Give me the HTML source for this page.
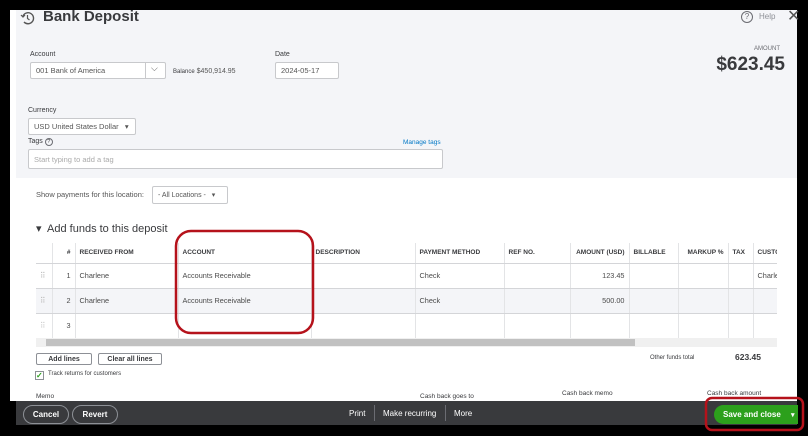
<!DOCTYPE html>
<html><head><style>
*{box-sizing:border-box;margin:0;padding:0}
body{width:808px;height:436px;background:#000;position:relative;overflow:hidden;font-family:"Liberation Sans",sans-serif;color:#393a3d}
.a{position:absolute}
.lbl{font-size:7px;color:#393a3d}
.in{position:absolute;background:#fff;border:1px solid #c8c9cc;border-radius:2px;font-size:7.5px;color:#555;padding-left:5px;display:flex;align-items:center}
table{border-collapse:collapse;font-size:7.3px}
td,th{border-left:1px solid #e3e4e6;padding:0 4px;text-align:left;white-space:nowrap;overflow:hidden}
th{font-weight:bold;font-size:6.5px;color:#393a3d;height:20px;border-bottom:1px solid #d4d5d8}
td{height:25px;color:#4a4a4a;border-bottom:1px solid #d4d5d8}
.btn{position:absolute;border:1px solid #8d9096;border-radius:2px;background:#fff;font-size:7px;font-weight:bold;display:flex;align-items:center;justify-content:center;height:12px}
</style></head><body>
<div class="a" style="left:10px;top:10px;width:787px;height:391px;background:#fff"></div>
<div class="a" style="left:16px;top:10px;width:781px;height:168px;background:#f4f5f8"></div>
<svg class="a" style="left:20px;top:11px" width="15" height="14" viewBox="0 0 15 14"><path d="M3 5A5.5 5.5 0 1 1 4 11" fill="none" stroke="#555" stroke-width="1.4"/><path d="M7.5 4v3.5l2 1.5" fill="none" stroke="#555" stroke-width="1.2"/><path d="M1 4l2 2 2-2" fill="none" stroke="#555" stroke-width="1.2"/></svg>
<div class="a" style="left:43px;top:8px;font-size:15px;font-weight:bold;color:#393a3d">Bank Deposit</div>
<div class="a" style="left:741px;top:11px;width:12px;height:12px;border:1px solid #6b6c72;border-radius:50%;font-size:8px;text-align:center;line-height:10px;color:#6b6c72">?</div>
<div class="a" style="left:759px;top:12px;font-size:8px;color:#8d9096">Help</div>
<div class="a" style="left:787px;top:6px;font-size:16px;color:#555">✕</div>
<div class="a lbl" style="left:30px;top:51px">Account</div>
<div class="in" style="left:30px;top:62px;width:136px;height:17px">001 Bank of America</div>
<div class="a" style="left:145px;top:62px;width:1px;height:17px;background:#c8c9cc"></div>
<div class="a" style="left:151px;top:63px;font-size:9px;color:#555">⌵</div>
<div class="a" style="left:173px;top:68px;font-size:7px"><span style="font-size:6px">Balance</span> <span style="color:#555">$450,914.95</span></div>
<div class="a lbl" style="left:275px;top:51px">Date</div>
<div class="in" style="left:275px;top:62px;width:64px;height:17px">2024-05-17</div>
<div class="a" style="left:754px;top:46px;font-size:6px;color:#6b6c72">AMOUNT</div>
<div class="a" style="left:690px;top:54px;width:95px;text-align:right;font-size:19px;font-weight:bold;color:#393a3d">$623.45</div>
<div class="a lbl" style="left:28px;top:107px">Currency</div>
<div class="in" style="left:28px;top:118px;width:108px;height:17px">USD United States Dollar&nbsp;&nbsp;&nbsp;▾</div>
<div class="a lbl" style="left:28px;top:138px">Tags <span style="display:inline-block;width:8px;height:8px;border:1px solid #6b6c72;border-radius:50%;font-size:5.5px;text-align:center;line-height:7px">?</span></div>
<div class="a" style="left:403px;top:139px;font-size:6.5px;color:#0077c5">Manage tags</div>
<div class="in" style="left:28px;top:149px;width:415px;height:20px;color:#aaa">Start typing to add a tag</div>
<div class="a" style="left:36px;top:190px;font-size:7.5px;color:#555">Show payments for this location:</div>
<div class="in" style="left:152px;top:186px;width:76px;height:18px;font-size:7px">- All Locations -&nbsp;&nbsp;&nbsp;▾</div>
<div class="a" style="left:36px;top:222px;font-size:11px;color:#393a3d">▾&nbsp; Add funds to this deposit</div>
<div class="a" style="left:36px;top:243px;width:741px;overflow:hidden">
<table style="width:760px;table-layout:fixed">
<colgroup><col style="width:16px"><col style="width:23px"><col style="width:103px"><col style="width:133px"><col style="width:104px"><col style="width:89px"><col style="width:66px"><col style="width:59px"><col style="width:49px"><col style="width:50px"><col style="width:25px"><col style="width:43px"></colgroup>
<tr><th style="border-left:none"></th><th style="text-align:right">#</th><th>RECEIVED FROM</th><th>ACCOUNT</th><th>DESCRIPTION</th><th>PAYMENT METHOD</th><th>REF NO.</th><th style="text-align:right">AMOUNT (USD)</th><th>BILLABLE</th><th style="text-align:right">MARKUP %</th><th>TAX</th><th>CUSTOMER</th></tr>
<tr><td style="border-left:none;color:#bbb">⠿</td><td style="text-align:right">1</td><td>Charlene</td><td>Accounts Receivable</td><td></td><td>Check</td><td></td><td style="text-align:right">123.45</td><td></td><td></td><td></td><td>Charlene</td></tr>
<tr style="background:#f4f5f8"><td style="border-left:none;color:#bbb">⠿</td><td style="text-align:right">2</td><td>Charlene</td><td>Accounts Receivable</td><td></td><td>Check</td><td></td><td style="text-align:right">500.00</td><td></td><td></td><td></td><td></td></tr>
<tr><td style="border-left:none;color:#ccc">⠿</td><td style="text-align:right">3</td><td></td><td></td><td></td><td></td><td></td><td></td><td></td><td></td><td></td><td></td></tr>
</table></div>
<div class="a" style="left:36px;top:338px;width:741px;height:9px;background:#f0f0f0"></div>
<div class="a" style="left:46px;top:339px;width:589px;height:7px;background:#c1c1c1"></div>
<div class="btn" style="left:36px;top:353px;width:56px">Add lines</div>
<div class="btn" style="left:98px;top:353px;width:64px">Clear all lines</div>
<div class="a" style="left:35px;top:371px;width:9px;height:9px;border:1px solid #8d9096;background:#fff;color:#2ca01c;font-size:8px;line-height:7px;font-weight:bold">✓</div>
<div class="a" style="left:48px;top:371px;font-size:6px">Track returns for customers</div>
<div class="a" style="left:650px;top:355px;font-size:6px">Other funds total</div>
<div class="a" style="left:735px;top:352px;font-size:8.5px;font-weight:bold">623.45</div>
<div class="a" style="left:36px;top:393px;font-size:6.5px">Memo</div>
<div class="a" style="left:420px;top:393px;font-size:6.5px">Cash back goes to</div>
<div class="a" style="left:562px;top:390px;font-size:6.5px">Cash back memo</div>
<div class="a" style="left:707px;top:390px;font-size:6.5px">Cash back amount</div>
<div class="a" style="left:16px;top:401px;width:781px;height:24px;background:#393a3d"></div>
<div class="a" style="left:23px;top:405px;width:46px;height:19px;border:1px solid #8d9096;border-radius:10px;color:#fff;font-size:8px;font-weight:bold;text-align:center;line-height:17px">Cancel</div>
<div class="a" style="left:72px;top:405px;width:46px;height:19px;border:1px solid #8d9096;border-radius:10px;color:#fff;font-size:8px;font-weight:bold;text-align:center;line-height:17px">Revert</div>
<div class="a" style="left:349px;top:409px;font-size:8px;color:#fff">Print</div>
<div class="a" style="left:374px;top:405px;width:1px;height:16px;background:#6b6c72"></div>
<div class="a" style="left:383px;top:409px;font-size:8px;color:#fff">Make recurring</div>
<div class="a" style="left:445px;top:405px;width:1px;height:16px;background:#6b6c72"></div>
<div class="a" style="left:454px;top:409px;font-size:8px;color:#fff">More</div>
<div class="a" style="left:714px;top:405px;width:84px;height:19px;background:#2ca01c;border-radius:10px 0 0 10px;color:#fff;font-size:8px;font-weight:bold;line-height:19px;padding-left:9px">Save and close <span style="margin-left:8px;font-size:7px">▾</span></div>
<svg class="a" style="left:0;top:0" width="808" height="436"><rect x="176" y="231" width="137" height="102" rx="15" fill="none" stroke="#b5121b" stroke-width="2.5"/><rect x="706" y="398" width="97" height="32" rx="6" fill="none" stroke="#b5121b" stroke-width="2.5"/></svg>
</body></html>
